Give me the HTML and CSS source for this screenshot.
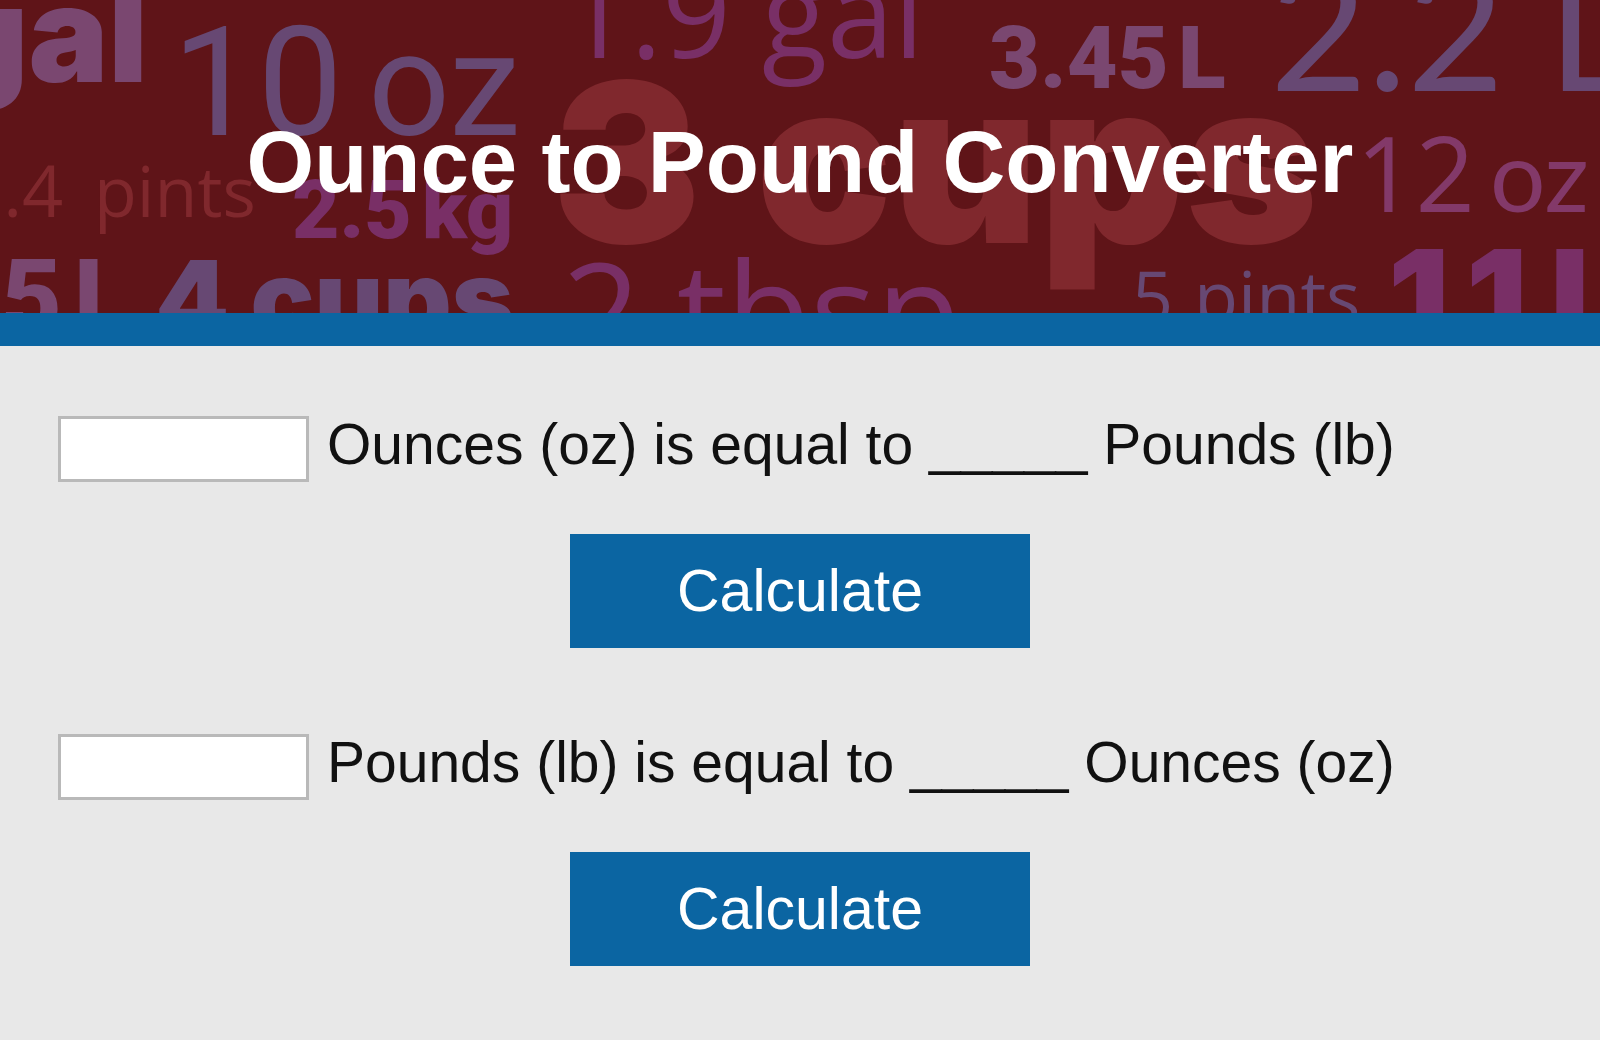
FILE: index.html
```html
<!DOCTYPE html>
<html lang="en">
<head>
<meta charset="utf-8">
<meta name="viewport" content="width=device-width, initial-scale=1">
<title>Ounce to Pound Converter</title>
<link rel="stylesheet" href="styles.css">
</head>
<body>
<header class="banner">
  <svg class="banner-art" viewBox="0 0 1600 313" preserveAspectRatio="xMidYMid slice" aria-hidden="true">
    <g class="red">
      <text class="black" font-size="223" x="552" y="243">3</text>
      <text class="black" font-size="226" x="756" y="243">cups</text>
      <text class="light" font-size="72" x="-38" y="217">5.4</text>
      <text class="light" font-size="70" x="94" y="217">pints</text>
    </g>
    <g class="mauve">
      <text class="black" font-size="134" x="148" y="82" text-anchor="end">gal</text>
      <text class="narrow" font-size="88" x="989" y="88">3.45</text>
      <text class="narrow" font-size="88" x="1178" y="88">L</text>
      <text class="narrow" font-size="104" x="62" y="333" text-anchor="end">15</text>
      <text class="narrow" font-size="104" x="74" y="333">L</text>
    </g>
    <g class="indigo">
      <text class="plain" font-size="152" x="172" y="135">10</text>
      <text class="plain" font-size="144" x="368" y="135">oz</text>
      <text class="round" font-size="168" x="1270" y="91">2.2 L</text>
      <text class="black" font-size="106" x="155" y="337">4 cups</text>
      <text class="light" font-size="72" x="1132" y="323">5</text>
      <text class="light" font-size="72" x="1194" y="323">pints</text>
    </g>
    <g class="plum">
      <text class="light" font-size="120" x="562" y="58">1.9 gal</text>
      <text class="narrow" font-size="82" x="292" y="238">2.5</text>
      <text class="narrow" font-size="82" x="422" y="238">kg</text>
      <text class="light" font-size="138" x="562" y="362">2 tbsp</text>
      <text class="black" font-size="136" x="1388" y="348">1</text>
      <text class="black" font-size="136" x="1466" y="348">1</text>
      <text class="black" font-size="136" x="1550" y="348">L</text>
    </g>
    <g class="rose">
      <text class="light" font-size="104" x="1356" y="212">12</text>
      <text class="round" font-size="98" x="1490" y="212">oz</text>
    </g>
  </svg>
  <h1 class="title">Ounce to Pound Converter</h1>
</header>
<main class="converters">
  <form class="converter">
    <div class="row">
      <input class="amount" id="ounces" type="text" inputmode="decimal">
      <label class="sentence" for="ounces">Ounces (oz) is equal to _____ Pounds (lb)</label>
    </div>
    <button class="calculate" type="button">Calculate</button>
  </form>
  <form class="converter">
    <div class="row">
      <input class="amount" id="pounds" type="text" inputmode="decimal">
      <label class="sentence" for="pounds">Pounds (lb) is equal to _____ Ounces (oz)</label>
    </div>
    <button class="calculate" type="button">Calculate</button>
  </form>
</main>
</body>
</html>
```
FILE: styles.css
```css
* {
  box-sizing: border-box;
}

body {
  margin: 0;
  background: #e8e8e8;
  color: #111;
  font-family: "Liberation Sans", Arial, sans-serif;
}

.banner {
  position: relative;
  overflow: hidden;
  padding: 112px 24px 101px;
  border-bottom: 33px solid #0b65a2;
  background: #5f1418;
}

.banner-art {
  position: absolute;
  inset: 0;
  width: 100%;
  height: 100%;
}

.title {
  position: relative;
  margin: 0;
  color: #fff;
  font-size: 87px;
  font-weight: bold;
  line-height: 100px;
  text-align: center;
}

.red { fill: #80282d; }
.mauve { fill: #7a4770; }
.indigo { fill: #674873; }
.plum { fill: #792f66; }
.rose { fill: #833969; }

.black {
  font-family: Inter, sans-serif;
  font-weight: 900;
}

.narrow {
  font-family: Roboto, sans-serif;
  font-weight: 900;
}

.light {
  font-family: "Open Sans", sans-serif;
}

.plain {
  font-family: Roboto, sans-serif;
}

.round {
  font-family: Lato, sans-serif;
}

.converters {
  display: flex;
  flex-direction: column;
  gap: 86px;
  padding: 70px 58px;
}

.converter {
  display: flex;
  flex-direction: column;
  align-items: center;
  gap: 52px;
}

.row {
  display: flex;
  flex-wrap: wrap;
  align-items: flex-start;
  align-self: stretch;
  gap: 18px;
}

.amount {
  width: 251px;
  height: 66px;
  padding: 0 12px;
  border: 3px solid #b9b9b9;
  border-radius: 0;
  background: #fff;
  font: inherit;
  font-size: 40px;
}

.sentence {
  font-size: 57px;
  line-height: 57px;
}

.calculate {
  padding: 24px 107px;
  border: 0;
  background: #0b65a2;
  color: #fff;
  font: inherit;
  font-size: 59px;
  line-height: 66px;
}
```
